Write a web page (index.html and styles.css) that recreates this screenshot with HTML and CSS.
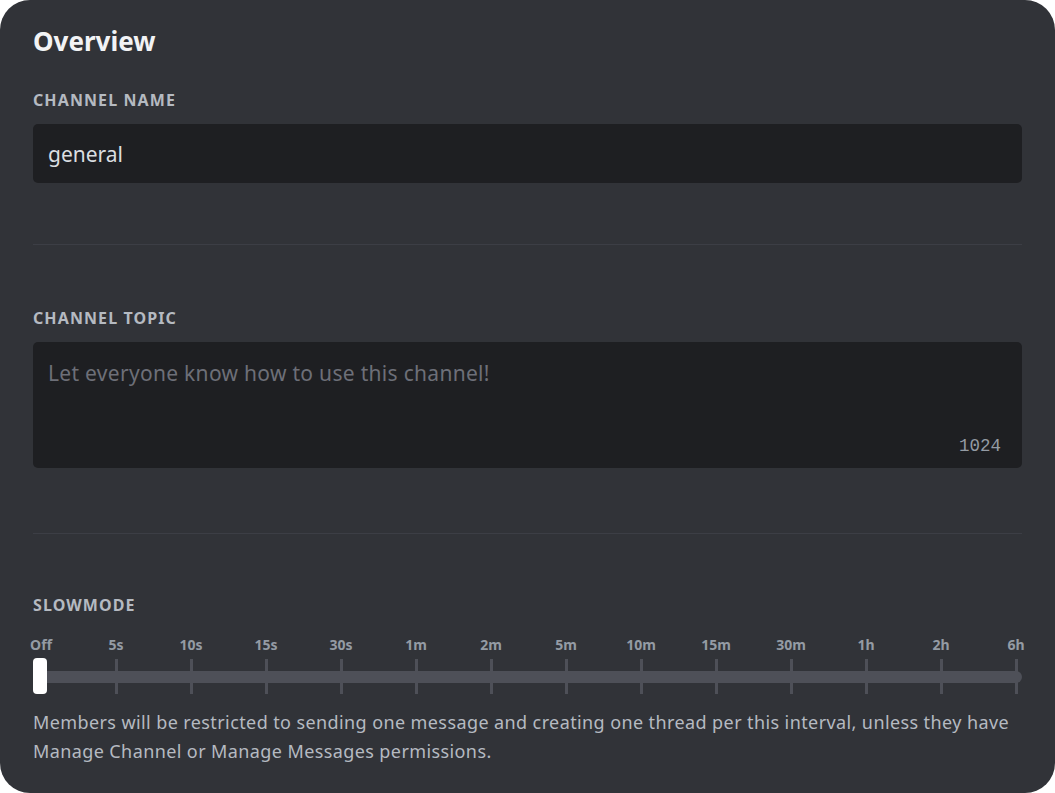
FILE: index.html
```html
<!DOCTYPE html>
<html lang="en">
<head>
<meta charset="utf-8">
<title>Overview</title>
<link rel="stylesheet" href="styles.css">
</head>
<body>
<div class="card">
  <h1 class="title">Overview</h1>

  <section class="field field-name">
    <div class="label">Channel Name</div>
    <div class="input">general</div>
  </section>

  <div class="divider divider-1"></div>

  <section class="field field-topic">
    <div class="label">Channel Topic</div>
    <div class="textarea">
      <span class="placeholder">Let everyone know how to use this channel!</span>
      <span class="counter">1024</span>
    </div>
  </section>

  <div class="divider divider-2"></div>

  <section class="field field-slow">
    <div class="label">Slowmode</div>
    <div class="slider">
      <div class="track"></div>
      <div class="marks">
        <div class="mark"><span class="mark-label">Off</span><span class="tick"></span></div>
        <div class="mark"><span class="mark-label">5s</span><span class="tick"></span></div>
        <div class="mark"><span class="mark-label">10s</span><span class="tick"></span></div>
        <div class="mark"><span class="mark-label">15s</span><span class="tick"></span></div>
        <div class="mark"><span class="mark-label">30s</span><span class="tick"></span></div>
        <div class="mark"><span class="mark-label">1m</span><span class="tick"></span></div>
        <div class="mark"><span class="mark-label">2m</span><span class="tick"></span></div>
        <div class="mark"><span class="mark-label">5m</span><span class="tick"></span></div>
        <div class="mark"><span class="mark-label">10m</span><span class="tick"></span></div>
        <div class="mark"><span class="mark-label">15m</span><span class="tick"></span></div>
        <div class="mark"><span class="mark-label">30m</span><span class="tick"></span></div>
        <div class="mark"><span class="mark-label">1h</span><span class="tick"></span></div>
        <div class="mark"><span class="mark-label">2h</span><span class="tick"></span></div>
        <div class="mark"><span class="mark-label">6h</span><span class="tick"></span></div>
      </div>
      <div class="thumb"></div>
    </div>
    <p class="desc">Members will be restricted to sending one message and creating one thread per this interval, unless they have Manage Channel or Manage Messages permissions.</p>
  </section>
</div>
</body>
</html>
```

FILE: styles.css
```css
html, body {
  margin: 0;
  padding: 0;
  background: #ffffff;
}

body {
  font-family: "Noto Sans", "Open Sans", sans-serif;
}

.card {
  box-sizing: border-box;
  width: 1055px;
  height: 793px;
  background: #313338;
  border-radius: 30px;
  padding: 25px 33px 0 33px;
  overflow: hidden;
}

.title {
  margin: 0;
  font-size: 26px;
  line-height: 32px;
  font-weight: 700;
  color: #f2f3f5;
}

.label {
  font-size: 16px;
  line-height: 20px;
  font-weight: 700;
  text-transform: uppercase;
  color: #b5bac1;
  letter-spacing: 1.1px;
}

.field-name {
  margin-top: 33px;
}

.input {
  box-sizing: border-box;
  margin-top: 14px;
  height: 59px;
  background: #1e1f22;
  border-radius: 5px;
  padding: 0 15px;
  display: flex;
  align-items: center;
  font-size: 21px;
  color: #dbdee1;
}

.divider {
  height: 1px;
  background: #3c3e45;
}

.divider-1 {
  margin-top: 61px;
}

.field-topic {
  margin-top: 63px;
}

.textarea {
  position: relative;
  box-sizing: border-box;
  margin-top: 14px;
  height: 126px;
  background: #1e1f22;
  border-radius: 5px;
  padding: 19px 15px 0 15px;
  font-size: 21px;
  line-height: 25px;
  letter-spacing: 0.3px;
}

.placeholder {
  color: #6d6f78;
}

.counter {
  position: absolute;
  right: 21px;
  bottom: 12px;
  font-family: "Liberation Mono", "DejaVu Sans Mono", monospace;
  font-size: 17.5px;
  line-height: 20px;
  letter-spacing: 0;
  color: #949ba4;
}

.divider-2 {
  margin-top: 65px;
}

.field-slow {
  margin-top: 61px;
}

.slider {
  position: relative;
  margin-top: 22px;
}

.track {
  position: absolute;
  left: 0;
  right: 0;
  top: 34px;
  height: 12px;
  border-radius: 6px;
  background: #4e5058;
}

.marks {
  position: relative;
  display: flex;
  justify-content: space-between;
  padding: 0 6px 0 8px;
}

.mark {
  width: 0;
  display: flex;
  flex-direction: column;
  align-items: center;
}

.mark-label {
  font-size: 14px;
  line-height: 16px;
  font-weight: 700;
  color: #949ba4;
  white-space: nowrap;
}

.tick {
  margin-top: 6px;
  width: 3px;
  height: 35px;
  background: #4e5058;
}

.thumb {
  position: absolute;
  left: 0;
  top: 21px;
  width: 14px;
  height: 36px;
  border-radius: 4px;
  background: #ffffff;
}

.desc {
  margin: 14px 0 0 0;
  font-size: 18px;
  line-height: 29px;
  letter-spacing: 0.4px;
  color: #b5bac1;
}
```
